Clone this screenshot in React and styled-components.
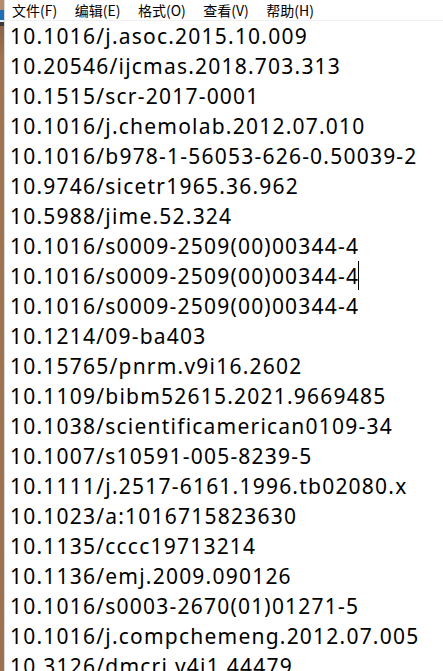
import styled, { createGlobalStyle } from "styled-components"

const GlobalStyle = createGlobalStyle`
  html, body {
    margin: 0;
    padding: 0;
    background: #ffffff;
    overflow: hidden;
  }
`

const dois = [
  "10.1016/j.asoc.2015.10.009",
  "10.20546/ijcmas.2018.703.313",
  "10.1515/scr-2017-0001",
  "10.1016/j.chemolab.2012.07.010",
  "10.1016/b978-1-56053-626-0.50039-2",
  "10.9746/sicetr1965.36.962",
  "10.5988/jime.52.324",
  "10.1016/s0009-2509(00)00344-4",
  "10.1016/s0009-2509(00)00344-4",
  "10.1016/s0009-2509(00)00344-4",
  "10.1214/09-ba403",
  "10.15765/pnrm.v9i16.2602",
  "10.1109/bibm52615.2021.9669485",
  "10.1038/scientificamerican0109-34",
  "10.1007/s10591-005-8239-5",
  "10.1111/j.2517-6161.1996.tb02080.x",
  "10.1023/a:1016715823630",
  "10.1135/cccc19713214",
  "10.1136/emj.2009.090126",
  "10.1016/s0003-2670(01)01271-5",
  "10.1016/j.compchemeng.2012.07.005",
  "10.3126/dmcri.v4i1.44479",
]

const menus = ["文件(F)", "编辑(E)", "格式(O)", "查看(V)", "帮助(H)"]

const Screen = styled.div`
  display: flex;
  width: 443px;
  height: 671px;
  overflow: hidden;
`

const Desktop = styled.div`
  width: 4px;
  flex: none;
  background: linear-gradient(
    to bottom,
    #b48c6c 0px,
    #b48c6c 10px,
    #1f6fb6 10px,
    #1f6fb6 20px,
    #e6eef5 20px,
    #e6eef5 22px,
    #3a3a3a 22px,
    #3a3a3a 26px,
    #8c6448 26px,
    #a07450 60px,
    #9c7250 100%
  );
`

const Window = styled.div`
  flex: 1;
  display: flex;
  flex-direction: column;
  background: #ffffff;
  border-left: 1px solid #d8d8d8;
  min-width: 0;
`

const MenuBar = styled.div`
  display: flex;
  align-items: center;
  height: 21px;
  padding-left: 7px;
  border-bottom: 1px solid #f0f0f0;
  font-family: "Noto Sans CJK SC", "Noto Sans", sans-serif;
  font-size: 14px;
  color: #000000;
`

const MenuItem = styled.span`
  margin-right: 17.5px;
  white-space: nowrap;
  line-height: 20px;
`

const Editor = styled.div`
  flex: 1;
  padding: 0 0 0 5px;
  font-family: "Noto Sans", "Open Sans", sans-serif;
  font-size: 21px;
  line-height: 30px;
  color: #000000;
  white-space: pre;
`

const Line = styled.div`
  height: 30px;
  letter-spacing: 1.22px;
`

const Caret = styled.span`
  display: inline-block;
  width: 1px;
  height: 29px;
  background: #000000;
  vertical-align: top;
  margin-left: -1px;
`

export default function App() {
  return (
    <>
      <GlobalStyle />
      <Screen>
        <Desktop />
        <Window>
          <MenuBar>
            {menus.map((m) => (
              <MenuItem key={m}>{m}</MenuItem>
            ))}
          </MenuBar>
          <Editor>
            {dois.map((d, i) => (
              <Line key={i}>
                {d}
                {i === 8 && <Caret />}
              </Line>
            ))}
          </Editor>
        </Window>
      </Screen>
    </>
  )
}
